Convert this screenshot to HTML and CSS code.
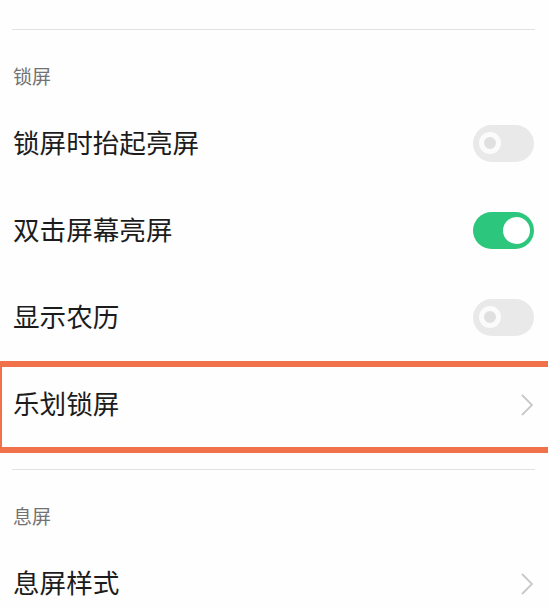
FILE: index.html
```html
<!DOCTYPE html>
<html lang="zh-CN">
<head>
    <meta charset="UTF-8">
    <meta name="viewport" content="width=device-width, initial-scale=1.0">
    <title>锁屏设置</title>
    <link rel="stylesheet" href="styles.css">
</head>
<body>
    <div class="settings">
        <div class="divider"></div>
        <div class="section-title">锁屏</div>

        <div class="row">
            <span class="label">锁屏时抬起亮屏</span>
            <span class="switch"><span class="knob"></span></span>
        </div>
        <div class="row">
            <span class="label">双击屏幕亮屏</span>
            <span class="switch on"><span class="knob"></span></span>
        </div>
        <div class="row">
            <span class="label">显示农历</span>
            <span class="switch"><span class="knob"></span></span>
        </div>
        <div class="row highlighted">
            <span class="label">乐划锁屏</span>
            <svg class="chevron" viewBox="0 0 12 22">
                <polyline points="1,1 11,11 1,21" fill="none" stroke="#c8c8c8" stroke-width="1.8" />
            </svg>
        </div>

        <div class="divider gap"></div>
        <div class="section-title">息屏</div>

        <div class="row">
            <span class="label">息屏样式</span>
            <svg class="chevron" viewBox="0 0 12 22">
                <polyline points="1,1 11,11 1,21" fill="none" stroke="#c8c8c8" stroke-width="1.8" />
            </svg>
        </div>
    </div>
</body>
</html>
```

FILE: styles.css
```css
body {
    margin: 0;
    background: #fefefe;
    font-family: "Noto Sans CJK SC", "Noto Sans", sans-serif;
    overflow: hidden;
}

.settings {
    padding-top: 29px;
}

.divider {
    height: 1px;
    margin: 0 13px 0 12px;
    background: #e3e3e3;
}
.divider.gap {
    margin-top: 21px;
}

.section-title {
    padding: 34px 13px 12px;
    font-size: 19px;
    line-height: 24px;
    color: #727272;
}

.row {
    position: relative;
    height: 87px;
    display: flex;
    align-items: center;
    justify-content: space-between;
    padding: 0 14px 0 13px;
}

.label {
    font-size: 26.6px;
    line-height: 30px;
    margin-bottom: 3px;
    color: #1c1c1c;
}

/* orange frame drawn over the row */
.highlighted::after {
    content: "";
    position: absolute;
    left: -4px;
    right: -10px;
    top: 0;
    bottom: -5px;
    border: 6px solid #f0714a;
}

.chevron {
    width: 12px;
    height: 22px;
    margin-right: 1px;
}

.switch {
    position: relative;
    width: 61px;
    height: 37px;
    border-radius: 19px;
    background: #e9e9e9;
}
.switch .knob {
    position: absolute;
    left: 6px;
    top: 7px;
    width: 12px;
    height: 12px;
    border-radius: 50%;
    background: #e0e0e0;
    border: 5px solid #fbfbfb;
}
.switch.on {
    background: #2cc77c;
}
.switch.on .knob {
    left: auto;
    right: 4px;
    top: 5px;
    width: 27px;
    height: 27px;
    border: none;
    background: #fff;
}
```
